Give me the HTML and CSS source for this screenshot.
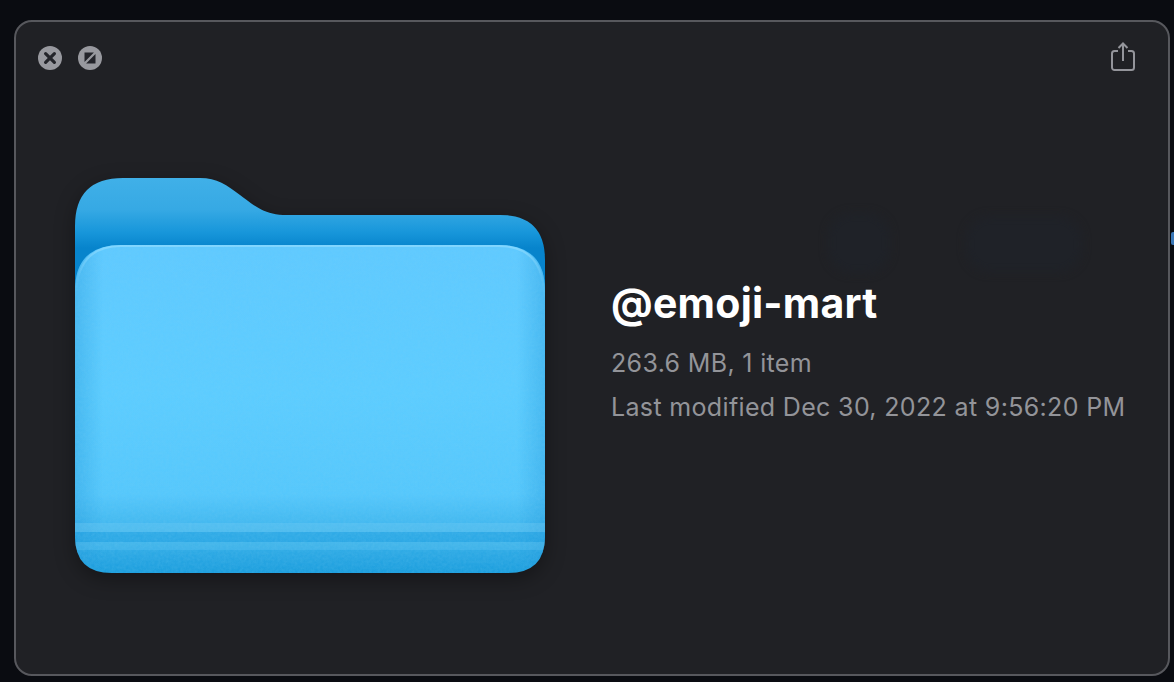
FILE: index.html
```html
<!DOCTYPE html>
<html lang="en">
<head>
<meta charset="utf-8">
<title>@emoji-mart</title>
<link rel="stylesheet" href="styles.css">
</head>
<body>
<div class="edge-sliver"></div>
<div class="window">
  <div class="ghost ghost-a"></div>
  <div class="ghost ghost-b"></div>
  <header class="toolbar">
    <div class="controls">
      <svg class="ctl" viewBox="0 0 24 24"><circle cx="12" cy="12" r="12" fill="#98999f"/><path d="M7.600 7.600l8.800 8.800M16.400 7.600l-8.800 8.800" stroke="#23242a" stroke-width="3.200" stroke-linecap="round"/></svg>
      <svg class="ctl" viewBox="0 0 24 24"><circle cx="12" cy="12" r="12" fill="#98999f"/><path d="M6.500 6.500h9.400l-9.400 9.400zM17.500 17.500H8.100l9.400-9.400z" fill="#23242a"/></svg>
    </div>
    <svg class="share" viewBox="0 0 24 30" fill="none" stroke="#94959b" stroke-width="2"><path d="M7 9H3.500A2.500 2.500 0 0 0 1 11.500V25.500A2.500 2.500 0 0 0 3.500 28H20.500A2.500 2.500 0 0 0 23 25.500V11.500A2.500 2.500 0 0 0 20.500 9H17"/><path d="M12 19V1.500M7.500 6l4.500-4.500L16.500 6"/></svg>
  </header>
  <main class="content">
    <svg class="folder" viewBox="0 0 470 395">
      <defs>
        <linearGradient id="back" gradientUnits="userSpaceOnUse" x1="0" y1="0" x2="0" y2="70">
          <stop offset="0" stop-color="#40b0e8"/>
          <stop offset=".45" stop-color="#36a9e4"/>
          <stop offset=".78" stop-color="#1796da"/>
          <stop offset="1" stop-color="#0784cc"/>
        </linearGradient>
        <linearGradient id="front" x1="0" y1="0" x2="0" y2="1">
          <stop offset="0" stop-color="#60caff"/>
          <stop offset=".45" stop-color="#5dcdff"/>
          <stop offset=".76" stop-color="#56c8fc"/>
          <stop offset=".87" stop-color="#3fb5ed"/>
          <stop offset="1" stop-color="#1c9edd"/>
        </linearGradient>
        <linearGradient id="edgeL" x1="0" y1="0" x2="1" y2="0">
          <stop offset="0" stop-color="#1f95d8" stop-opacity=".36"/>
          <stop offset=".06" stop-color="#1f95d8" stop-opacity="0"/>
          <stop offset=".94" stop-color="#1f95d8" stop-opacity="0"/>
          <stop offset="1" stop-color="#1f95d8" stop-opacity=".36"/>
        </linearGradient>
        <linearGradient id="rim" x1="0" y1="0" x2="0" y2="1">
          <stop offset="0" stop-color="#9be0ff" stop-opacity=".55"/>
          <stop offset=".6" stop-color="#9be0ff" stop-opacity=".12"/>
          <stop offset="1" stop-color="#9be0ff" stop-opacity="0"/>
        </linearGradient>
        <clipPath id="body"><path d="M0 113Q0 67 46 67H424Q470 67 470 113V358Q470 395 433 395H37Q0 395 0 358Z"/></clipPath>
        <filter id="grain" x="0" y="0" width="100%" height="100%">
          <feTurbulence type="fractalNoise" baseFrequency=".35" numOctaves="3" seed="4"/>
          <feColorMatrix values="0 0 0 0 .2  0 0 0 0 .62  0 0 0 0 .9  .5 .5 0 0 -.3"/>
        </filter>
      </defs>
      <path d="M0 48Q0 0 48 0H125C142 0 152 7 165 17C181 29 190 37 212 37H425Q470 37 470 82V360H0Z" fill="url(#back)"/>
      <path d="M0 113Q0 67 46 67H424Q470 67 470 113V358Q470 395 433 395H37Q0 395 0 358Z" fill="url(#front)"/>
      <g clip-path="url(#body)">
        <rect width="470" height="395" fill="url(#edgeL)"/>
        <rect y="345" width="470" height="9" fill="#84d6f8" fill-opacity=".26"/>
        <rect y="354" width="470" height="10" fill="#1f9fdf" fill-opacity=".42"/>
        <rect y="364" width="470" height="8" fill="#84d6f8" fill-opacity=".2"/>
        <rect width="470" height="395" filter="url(#grain)" opacity=".35"/>
      </g>
      <path d="M1 120Q1 68 46 68H424Q469 68 469 120" fill="none" stroke="url(#rim)" stroke-width="2"/>
    </svg>
    <section class="info">
      <h1 class="name">@emoji-mart</h1>
      <p class="meta">263.6 MB, 1 item</p>
      <p class="meta">Last modified Dec 30, 2022 at 9:56:20 PM</p>
    </section>
  </main>
</div>
</body>
</html>
```
FILE: styles.css
```css
* { box-sizing: border-box; }
html, body { margin: 0; height: 100%; }
body {
  background: #0a0c11;
  padding: 20px 4px 6px 14px;
  font-family: Inter, "Liberation Sans", sans-serif;
  overflow: hidden;
}
.window {
  position: relative;
  height: 100%;
  background: #202125;
  border: 2px solid #57585d;
  border-radius: 18px;
  display: flex;
  flex-direction: column;
}
.edge-sliver {
  position: absolute;
  left: 1171px;
  top: 232px;
  width: 3px;
  height: 13px;
  border-radius: 2px 0 0 2px;
  background: #3a78b8;
}
.ghost {
  position: absolute;
  background: #1f2228;
  filter: blur(4px);
  border-radius: 24px;
}
.ghost-a { left: 812px; top: 191px; width: 62px; height: 60px; }
.ghost-b { left: 950px; top: 194px; width: 116px; height: 56px; }
.toolbar {
  position: relative;
  display: flex;
  justify-content: space-between;
  align-items: flex-start;
  padding: 24px 33px 0 22px;
  height: 156px;
}
.controls { display: flex; gap: 16px; }
.ctl { width: 24px; height: 24px; display: block; }
.share { width: 24px; height: 30px; display: block; margin-top: -4px; }
.content {
  position: relative;
  display: flex;
  align-items: center;
  padding-left: 59px;
  gap: 66px;
}
.folder {
  width: 470px;
  height: 395px;
  flex: none;
  display: block;
  filter: drop-shadow(0 6px 10px rgba(0, 0, 0, .35));
}
.info { padding-bottom: 51px; }
.name {
  margin: 0 0 22px;
  font-size: 41px;
  line-height: 48px;
  font-weight: 700;
  color: #fff;
  letter-spacing: .25px;
}
.meta {
  margin: 0 0 16px;
  font-size: 25px;
  line-height: 28px;
  letter-spacing: .34px;
  color: #939499;
  white-space: nowrap;
}
.meta:last-child { margin-bottom: 0; }
```
